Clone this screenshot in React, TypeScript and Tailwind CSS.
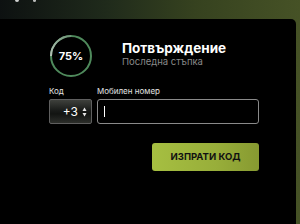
import React from "react";

export default function App() {
  const r = 20;
  const c = 2 * Math.PI * r;
  return (
    <div className="w-[300px] h-[224px] overflow-hidden bg-[linear-gradient(90deg,#0d1111_0%,#1f2a1b_35%,#36421f_65%,#465226_100%)] font-['Inter','Noto_Sans',sans-serif]">
      <div className="h-[19px] flex items-start gap-[14px] pl-[15px]">
        <div className="w-[4px] h-[2px] rounded-b-full bg-white/80" />
        <div className="w-[3px] h-[2px] rounded-b-full bg-white/70" />
      </div>
      <div className="w-[296px] h-[205px] bg-black rounded-tr-[5px] pt-[15px] pl-[49px]">
        <div className="flex items-center gap-[29px]">
          <div className="relative w-[44px] h-[44px]">
            <svg width="44" height="44" viewBox="0 0 44 44">
              <defs>
                <linearGradient id="g1" x1="0" y1="1" x2="1" y2="0">
                  <stop offset="0" stopColor="#4a7d55" />
                  <stop offset="1" stopColor="#d8d8d8" />
                </linearGradient>
              </defs>
              <circle cx="22" cy="22" r={r} fill="none" stroke="#4f8a5c" strokeWidth="2" />
              <circle
                cx="22"
                cy="22"
                r={r}
                fill="none"
                stroke="url(#g1)"
                strokeWidth="2"
                strokeDasharray={`${c * 0.25} ${c}`}
                transform="rotate(180 22 22)"
              />
            </svg>
            <div className="absolute inset-0 flex items-center justify-center text-white text-[11px] font-bold">75%</div>
          </div>
          <div className="flex flex-col mt-[-5px]">
            <div className="text-white text-[13.5px] font-bold leading-[16px]">Потвърждение</div>
            <div className="text-[#8a8a8a] text-[9.5px] leading-[12px]">Последна стъпка</div>
          </div>
        </div>
        <div className="flex gap-[5px] mt-[8px]">
          <div className="flex flex-col">
            <div className="text-white/90 text-[8px] leading-[10px] mb-[3px]">Код</div>
            <div className="w-[43px] h-[25px] rounded-[2px] border border-[#5f5f5f] bg-[linear-gradient(180deg,#3e403c_0%,#1a1c1a_45%,#121412_60%,#2c2e2a_100%)] flex items-center justify-end pr-[4px] gap-[4px]">
              <span className="text-white text-[12px] leading-none">+3</span>
              <svg width="5" height="10" viewBox="0 0 5 10">
                <path d="M2.5 0.5 L4.5 4 L0.5 4 Z" fill="#e5e5e5" />
                <path d="M2.5 9.5 L4.5 6 L0.5 6 Z" fill="#e5e5e5" />
              </svg>
            </div>
          </div>
          <div className="flex flex-col">
            <div className="text-white/90 text-[8px] leading-[10px] mb-[3px]">Мобилен номер</div>
            <div className="w-[162px] h-[25px] rounded-[3px] border border-[#8a8a8a] bg-black flex items-center pl-[6px]">
              <div className="w-[1px] h-[11px] bg-white" />
            </div>
          </div>
        </div>
        <div className="flex justify-end w-[210px] mt-[19px]">
          <div className="w-[107px] h-[28px] rounded-[3px] bg-[linear-gradient(90deg,#a6bf41_0%,#98ae3a_60%,#879a31_100%)] flex items-center justify-center text-[#111] text-[9.5px] font-bold">
            ИЗПРАТИ КОД
          </div>
        </div>
      </div>
    </div>
  );
}
